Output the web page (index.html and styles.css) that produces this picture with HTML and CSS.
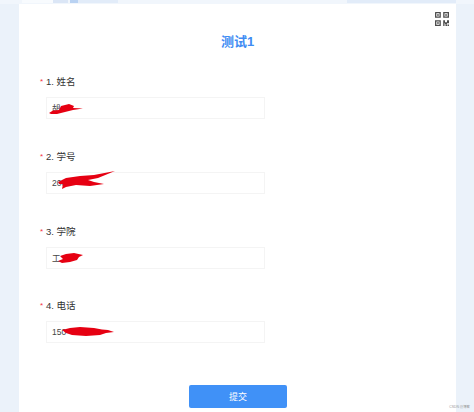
FILE: index.html
```html
<!DOCTYPE html>
<html lang="zh">
<head>
<meta charset="utf-8">
<title>测试1</title>
<link rel="stylesheet" href="styles.css">
</head>
<body>
<div class="topstrip">
  <span class="tab tab-a"></span><span class="tab tab-b"></span><span class="tab tab-c"></span><span class="tab tab-d"></span><span class="tab tab-e"></span>
</div>
<main class="card">
  <svg class="qr" viewBox="0 0 14 14" width="14" height="14" aria-hidden="true">
    <path fill="#4d4d4d" fill-rule="evenodd" d="M0 .6Q0 0 .6 0h5.200v5.800H0zM1.300 1.300v3.200h3.200V1.300zM8.200 0H14v5.800H8.200zM9.500 1.300v3.200h3.200V1.300zM0 8.200h5.800V14H0zM1.300 9.500v3.200h3.200V9.500zM8.200 8.200h1.800v2h2v-2h2v3h-2v1h-2v-1H9.500V14H8.200zM12.500 12.500H14V14h-1.500zM10.500 12.500H12V14h-1.500z"/>
    <path fill="#888" d="M1.900 1.900h2v2h-2zM10.100 1.900h2v2h-2zM1.900 10.100h2v2h-2z"/>
  </svg>
  <h1 class="title">测试1</h1>
  <form class="form">
    <div class="field">
      <div class="label"><span class="req">*</span>1. 姓名</div>
      <div class="input"><span>胡</span>
        <svg class="scrib s1" viewBox="0 0 34 10"><path fill="#e60012" d="M0 9 4 6.500 10 6 12 2 20 0 25 2 24 4 34 4.500 24 6 16 8 8 10 2 10z"/></svg>
      </div>
    </div>
    <div class="field">
      <div class="label"><span class="req">*</span>2. 学号</div>
      <div class="input"><span>200</span>
        <svg class="scrib s2" viewBox="0 0 57 18"><path fill="#e60012" d="M0 11 8 7 22 5 36 4 57 0 40 7 30 9 36 11 46 13 32 15 18 14 8 16 4 18 5 13 1 13z"/></svg>
      </div>
    </div>
    <div class="field">
      <div class="label"><span class="req">*</span>3. 学院</div>
      <div class="input"><span>工</span>
        <svg class="scrib s3" viewBox="0 0 25 10"><path fill="#e60012" d="M2 3 8 1 16 0 25 2 21 4 19 7 12 9 4 10 0 8 5 6z"/></svg>
      </div>
    </div>
    <div class="field">
      <div class="label"><span class="req">*</span>4. 电话</div>
      <div class="input"><span>150</span>
        <svg class="scrib s4" viewBox="0 0 52 9"><path fill="#e60012" d="M0 3 8 1 18 0 32 1 40 2.500 46 3 52 5 44 6 38 8 24 9 10 8 4 6z"/></svg>
      </div>
    </div>
    <div class="actions"><button class="submit" type="button">提交</button></div>
  </form>
</main>
<div class="mark">CSDN @博客</div>
</body>
</html>
```

FILE: styles.css
```css
* { box-sizing: border-box; }
html, body { margin: 0; height: 100%; }
body {
  width: 474px;
  height: 412px;
  overflow: hidden;
  position: relative;
  background: #ebf2fa;
  font-family: "Liberation Sans", "Noto Sans CJK SC", sans-serif;
  color: #333;
}
.topstrip { height: 4px; display: flex; background: #f1f6fc; }
.tab { display: block; height: 3px; }
.tab-a { width: 31px; margin-left: 22px; background: #f8fbfe; }
.tab-b { width: 15px; background: #dbe6f6; }
.tab-c { width: 8px; margin-left: 2px; background: #b9d2f2; }
.tab-d { width: 40px; background: #e2ecf9; }
.tab-e { width: 109px; margin-left: auto; margin-right: 18px; background: #e2ecf9; }
.card {
  position: relative;
  width: 437px;
  height: 408px;
  margin-left: 19px;
  background: #fff;
  padding-top: 29px;
}
.qr { position: absolute; top: 8px; right: 7px; }
.title {
  margin: 0;
  text-align: center;
  color: #3f8cf3;
  font-size: 13px;
  line-height: 18px;
  font-weight: 700;
}
.form { padding: 24px 0 0 21px; }
.field { height: 74.750px; }
.label { font-size: 9.500px; line-height: 14px; color: #333; display: flex; align-items: center; }
.req { color: #f5333f; width: 6px; font-size: 8px; line-height: 14px; }
.input {
  position: relative;
  width: 219px;
  height: 22px;
  margin: 8px 0 0 6px;
  padding-left: 5px;
  border: 1px solid #f4f4f4;
  font-size: 8.500px;
  line-height: 20px;
  color: #444;
}
.scrib { position: absolute; display: block; }
.s1 { left: 2px; top: 6px; width: 34px; height: 10px; }
.s2 { left: 11px; top: -2px; width: 57px; height: 18px; }
.s3 { left: 11px; top: 5px; width: 25px; height: 10px; }
.s4 { left: 15px; top: 5px; width: 52px; height: 9px; }
.actions { margin-top: 11px; padding-left: 149px; }
.submit {
  display: block;
  width: 98px;
  height: 23px;
  border: 0;
  border-radius: 2px;
  background: #4091f7;
  color: #fff;
  font-family: inherit;
  font-size: 9px;
  padding: 0;
}
.mark { position: absolute; right: 4px; bottom: 2px; font-size: 3.400px; line-height: 5px; color: #999; }
```
